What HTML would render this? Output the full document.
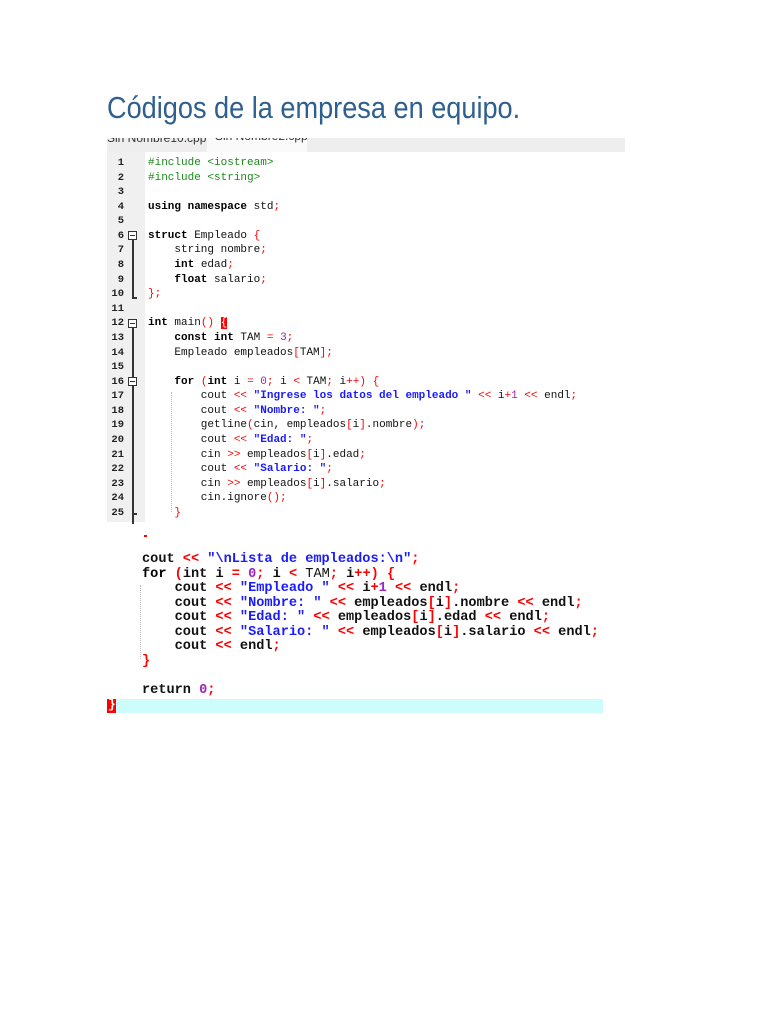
<!DOCTYPE html>
<html><head><meta charset="utf-8"><style>
body{margin:0;background:#fff;width:768px;height:1024px;position:relative;overflow:hidden}
.t{position:absolute;left:107px;top:90px;font-family:"Liberation Sans",sans-serif;font-size:31px;color:#2e5f8f;white-space:nowrap;transform-origin:0 0;transform:scaleX(0.875)}
.tabbar{position:absolute;left:107px;top:138px;width:518px;height:14px;background:#eeeeee;overflow:hidden}
.tab1{position:absolute;left:0;top:-7px;font:12px "Liberation Sans",sans-serif;color:#333;white-space:nowrap}
.tab2{position:absolute;left:100px;top:0;width:100px;height:16px;background:#fafafa;overflow:hidden}
.tab2 span{position:absolute;left:8px;top:-9px;font:12px "Liberation Sans",sans-serif;color:#333;white-space:nowrap}
.gut{position:absolute;left:107px;top:152px;width:38px;height:370px;background:#f0f0f0}
.ln{position:absolute;left:110px;top:156px;font:bold 10.5px/14.58px "Liberation Mono",monospace;color:#222;white-space:pre;width:14px;text-align:right}
.code{position:absolute;left:148px;top:156px;font:11px/14.58px "Liberation Mono",monospace;color:#111;white-space:pre}
.code2{position:absolute;left:142px;top:553px;font:bold 13.6px/14.58px "Liberation Mono",monospace;color:#111;white-space:pre}
.k{font-weight:bold;color:#000}
.s{color:#1a1aff;font-weight:bold}
.o{color:#f00}
.n{color:#a020c0}
.g{color:#1a8a1a}
.fold{position:absolute;width:9px;height:9px;border:1px solid #333;background:#fff;box-sizing:border-box}
.fold:after{content:"";position:absolute;left:1px;top:3px;width:5px;height:1px;background:#333}
.vl{position:absolute;width:1.5px;background:#333}
</style></head><body>
<div class="t">Códigos de la empresa en equipo.</div>
<div class="tabbar"><div class="tab1">Sin Nombre10.cpp</div><div class="tab2"><span>Sin Nombre2.cpp</span></div></div>
<div class="gut"></div>
<div class="ln">1
2
3
4
5
6
7
8
9
10
11
12
13
14
15
16
17
18
19
20
21
22
23
24
25</div>
<div class="fold" style="left:128px;top:231px"></div>
<div class="vl" style="left:132px;top:240px;height:58px"></div>
<div class="vl" style="left:132px;top:297px;height:1.5px;width:5px"></div>
<div class="fold" style="left:128px;top:319px"></div>
<div class="vl" style="left:132px;top:328px;height:196px"></div>
<div class="fold" style="left:128px;top:377px"></div>
<div class="vl" style="left:132px;top:513px;height:1.5px;width:5px"></div>
<div style="position:absolute;left:171px;top:392px;height:120px;border-left:1px dotted #bbb"></div>
<div class="code"><span class="g">#include &lt;iostream&gt;</span>
<span class="g">#include &lt;string&gt;</span>

<span class="k">using namespace</span> std<span class="o">;</span>

<span class="k">struct</span> Empleado <span class="o">{</span>
    string nombre<span class="o">;</span>
    <span class="k">int</span> edad<span class="o">;</span>
    <span class="k">float</span> salario<span class="o">;</span>
<span class="o">};</span>

<span class="k">int</span> main<span class="o">()</span> <span style="background:#f00;color:#fff">{</span>
    <span class="k">const int</span> TAM <span class="o">=</span> <span class="n">3</span><span class="o">;</span>
    Empleado empleados<span class="o">[</span>TAM<span class="o">];</span>

    <span class="k">for</span> <span class="o">(</span><span class="k">int</span> i <span class="o">=</span> <span class="n">0</span><span class="o">;</span> i <span class="o">&lt;</span> TAM<span class="o">;</span> i<span class="o">++)</span> <span class="o">{</span>
        cout <span class="o">&lt;&lt;</span> <span class="s">"Ingrese los datos del empleado "</span> <span class="o">&lt;&lt;</span> i<span class="o">+</span><span class="n">1</span> <span class="o">&lt;&lt;</span> endl<span class="o">;</span>
        cout <span class="o">&lt;&lt;</span> <span class="s">"Nombre: "</span><span class="o">;</span>
        getline<span class="o">(</span>cin, empleados<span class="o">[</span>i<span class="o">]</span>.nombre<span class="o">);</span>
        cout <span class="o">&lt;&lt;</span> <span class="s">"Edad: "</span><span class="o">;</span>
        cin <span class="o">&gt;&gt;</span> empleados<span class="o">[</span>i<span class="o">]</span>.edad<span class="o">;</span>
        cout <span class="o">&lt;&lt;</span> <span class="s">"Salario: "</span><span class="o">;</span>
        cin <span class="o">&gt;&gt;</span> empleados<span class="o">[</span>i<span class="o">]</span>.salario<span class="o">;</span>
        cin.ignore<span class="o">();</span>
    <span class="o">}</span></div>
<div style="position:absolute;left:144px;top:535px;width:3px;height:2px;background:#f00"></div>
<div style="position:absolute;left:107px;top:699px;width:496px;height:14px;background:#ccfcfc"></div>
<div style="position:absolute;left:107px;top:699px;width:9px;height:14px;background:#f00"></div>
<div style="position:absolute;left:140px;top:585px;height:74px;border-left:1px dotted #bbb"></div>
<div class="code2">cout <span class="o">&lt;&lt;</span> <span class="s">"\nLista de empleados:\n"</span><span class="o">;</span>
<span class="k">for</span> <span class="o">(</span>int i <span class="o">=</span> <span class="n">0</span><span class="o">;</span> i <span class="o">&lt;</span> <span style="font-weight:normal">TAM</span><span class="o">;</span> i<span class="o">++)</span> <span class="o">{</span>
    cout <span class="o">&lt;&lt;</span> <span class="s">"Empleado "</span> <span class="o">&lt;&lt;</span> i<span class="o">+</span><span class="n">1</span> <span class="o">&lt;&lt;</span> endl<span class="o">;</span>
    cout <span class="o">&lt;&lt;</span> <span class="s">"Nombre: "</span> <span class="o">&lt;&lt;</span> empleados<span class="o">[</span>i<span class="o">]</span>.nombre <span class="o">&lt;&lt;</span> endl<span class="o">;</span>
    cout <span class="o">&lt;&lt;</span> <span class="s">"Edad: "</span> <span class="o">&lt;&lt;</span> empleados<span class="o">[</span>i<span class="o">]</span>.edad <span class="o">&lt;&lt;</span> endl<span class="o">;</span>
    cout <span class="o">&lt;&lt;</span> <span class="s">"Salario: "</span> <span class="o">&lt;&lt;</span> empleados<span class="o">[</span>i<span class="o">]</span>.salario <span class="o">&lt;&lt;</span> endl<span class="o">;</span>
    cout <span class="o">&lt;&lt;</span> endl<span class="o">;</span>
<span class="o">}</span>

return <span class="n">0</span><span class="o">;</span></div>
<div style="position:absolute;left:108px;top:698px;font:bold 13px/14px 'Liberation Mono',monospace;color:#fff">}</div>
</body></html>
